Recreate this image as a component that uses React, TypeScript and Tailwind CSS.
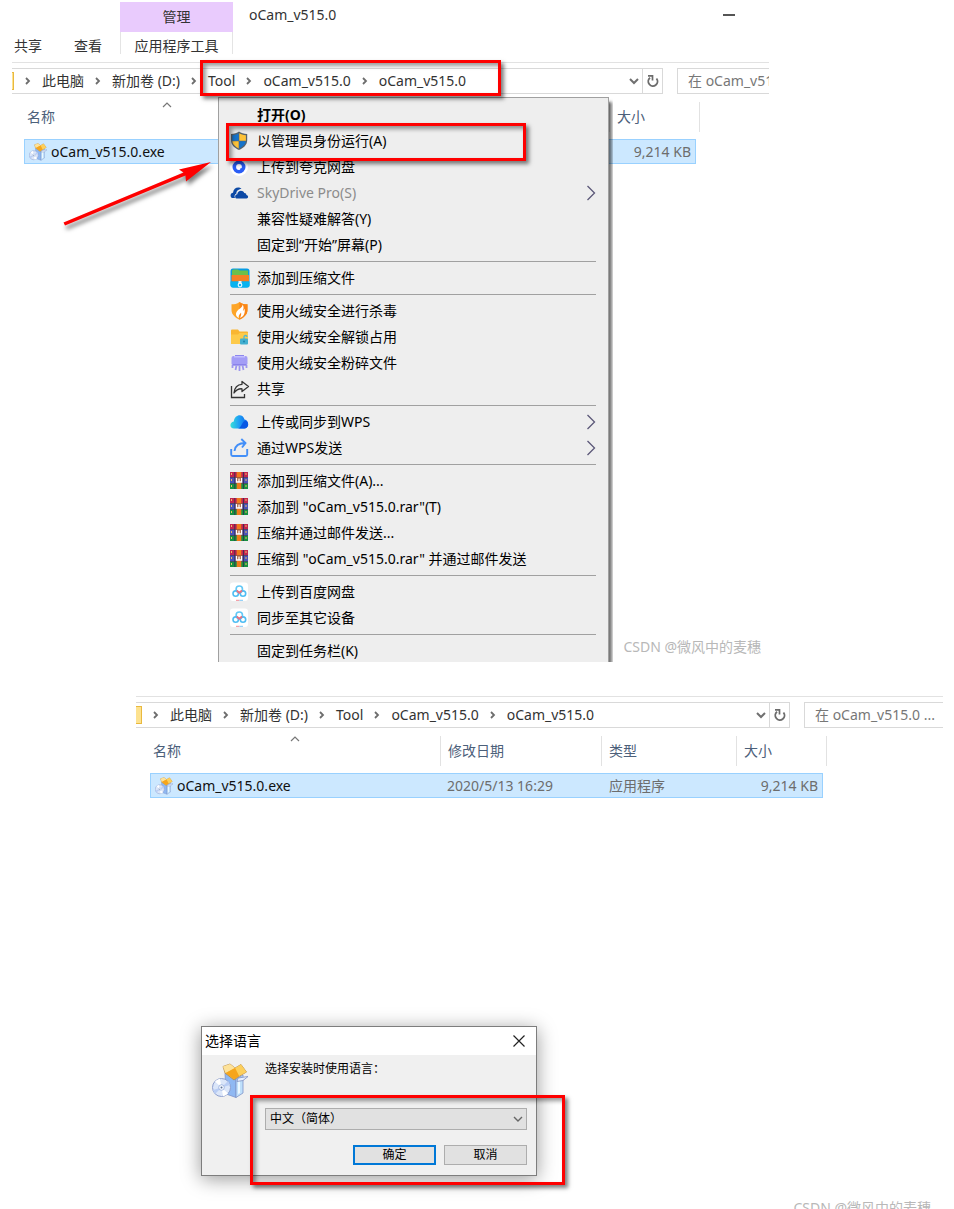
import { ReactNode } from "react";

const FONT = "font-['Noto_Sans','Noto_Sans_CJK_SC',sans-serif]";

/* ---------- icons ---------- */

function SetupIcon({ className }: { className: string }) {
  return (
    <svg viewBox="0 0 36 36" className={className} aria-hidden="true">
      <path d="M13 10 L24 16 L24 34.500 L14 31 Z" fill="#8fb8f2" stroke="#7d93c8" strokeWidth=".8" />
      <path d="M24 16 L31 12 L31 30 L24 34.500 Z" fill="#bfe0fb" stroke="#7d93c8" strokeWidth=".8" />
      <path d="M26 17 L28 16 L28 30 L26 31 Z" fill="#ecf8ff" />
      <path d="M11 3.500 L18 1 L23 5 L29 1.500 L34.500 9 L26 14 L22 17 L13 10 Z" fill="#f9b62d" stroke="#b08a52" strokeWidth=".8" />
      <path d="M18 1 L23 5 L13.500 10 L11 3.500 Z" fill="#fde29a" />
      <path d="M23 5 L29 1.500 L34.500 9 L27 13 Z" fill="#fccf5c" />
      <path d="M23 5 L27 13 L22 16 L14 10 Z" fill="#f6a51c" />
      <path d="M26 15 L36 13.500 L31 17.500 L25 18.500 Z" fill="#e6efff" stroke="#7f8fc0" strokeWidth=".8" />
      <circle cx="9.500" cy="24.500" r="9" fill="#dbe6f9" stroke="#8e9fce" strokeWidth="1" />
      <path d="M9.500 24.500 L3 18.500 A9 9 0 0 1 8 15.800 Z M9.500 24.500 L16 30.500 A9 9 0 0 1 11 33.200 Z" fill="#fff" />
      <path d="M9.500 24.500 L16 18 A9 9 0 0 1 18 22 Z M9.500 24.500 L3 31 A9 9 0 0 1 1 27 Z" fill="#b9cdf4" />
      <circle cx="9.500" cy="24.500" r="2.800" fill="#f4f8ff" stroke="#93a9d8" strokeWidth=".8" />
      <circle cx="9.500" cy="24.500" r="1" fill="#5d7296" />
    </svg>
  );
}

function Icon({ children }: { children: ReactNode }) {
  return (
    <svg viewBox="0 0 20 20" className="size-5" fill="none" aria-hidden="true">
      {children}
    </svg>
  );
}

const ShieldIcon = () => (
  <Icon>
    <path d="M9 .5 C11 2 14 3 17.200 3 V9 C17.200 14 13.500 17 9 19 C4.500 17 1 14 1 9 V3 C4 3 7 2 9 .5Z" fill="#59636b" />
    <path d="M8.700 2.300 V9.700 H2.300 V4.200 C5 4 7 3.400 8.700 2.300Z" fill="#1673c9" />
    <path d="M9.300 2.300 V9.700 H15.900 V4.200 C13 4 11 3.400 9.300 2.300Z" fill="#fdc238" />
    <path d="M8.700 10.300 V17.500 C5 15.500 2.600 13.500 2.300 10.300Z" fill="#fdc238" />
    <path d="M9.300 10.300 V17.500 C13 15.500 15.600 13.500 15.900 10.300Z" fill="#1673c9" />
  </Icon>
);

const QuarkIcon = () => (
  <Icon>
    <circle cx="9" cy="10" r="9" fill="#fff" />
    <circle cx="9" cy="10" r="4.700" stroke="#2a5df5" strokeWidth="3.600" />
    <path d="M10.500 11.500 L13 14" stroke="#2a5df5" strokeWidth="2" />
  </Icon>
);

const SkyDriveIcon = () => (
  <Icon>
    <path d="M2 15 C0 14 0 10 3 9.700 C3.500 5 8.500 3 11.500 6 C8 6 6 8.500 6.500 10.500 C4.500 11 4 13.500 5 15Z" fill="#0c49a5" />
    <path d="M6.500 15.500 C4.500 15 4.800 11.500 7.300 11.200 C7.500 7.200 13 6.500 14.300 10 C16.100 10 16.500 11.200 16.300 12 C18.900 12.500 18.500 15.500 16.500 15.500Z" fill="#0c49a5" />
  </Icon>
);

const ZipIcon = () => (
  <Icon>
    <rect x=".5" y=".5" width="19" height="19" rx="2.500" fill="#079be3" />
    <path d="M2 7.500 V3 Q2 1.500 3.500 1.500 H8 L9.500 2.500 H18 V7.500Z" fill="#6cc04b" />
    <rect x="1.500" y="7" width="17.500" height="6.500" fill="#f58025" />
    <path d="M.5 13.500 H19.500 V17 Q19.500 19.500 17 19.500 H3 Q.5 19.500 .5 17Z" fill="#06b3f0" />
    <rect x="8.500" y="13" width="3" height="3" fill="#dff4ff" />
    <circle cx="10" cy="17" r="1.800" stroke="#dff4ff" strokeWidth="1.200" />
  </Icon>
);

const FlameIcon = () => (
  <Icon>
    <path d="M9.500 1 C12 3 14.500 3.300 17.500 3.300 V9 C17.500 14 13 17 9.500 18.800 C6 17 1.500 14 1.500 9 V3.300 C4.500 3.300 7 3 9.500 1Z" fill="#fda528" />
    <path d="M9.500 1 C12 3 14.500 3.300 17.500 3.300 V9 C17.500 14 13 17 9.500 18.800Z" fill="#fa8617" />
    <path d="M12.500 3.500 C13 7 7 8 6 12.500 C5.700 14.500 7 16 9 17 C8 14 10 13.500 11 11.500 C11.500 13 11 15 10 17 C14 15.500 15.500 11.500 14.500 7.500 C14 9 13.500 9.500 12.800 10 C14 7.500 13.800 5 12.500 3.500Z" fill="#fff" />
  </Icon>
);

const FolderUnlockIcon = () => (
  <Icon>
    <path d="M1 16 V3.500 Q1 2.500 2 2.500 H8 L9.500 4.500 H17 Q18 4.500 18 5.500 V16 Q18 17 17 17 H2 Q1 17 1 16Z" fill="#f9b632" />
    <path d="M1 7.500 H8 L9.500 6 H18 V16 Q18 17 17 17 H2 Q1 17 1 16Z" fill="#fdca4a" />
    <path d="M14 12 V10 Q14 8.500 15.500 8.500 Q17 8.500 17 10" stroke="#52b9d4" strokeWidth="1.300" />
    <rect x="10" y="11.500" width="8" height="6" rx="1" fill="#42afd0" />
    <circle cx="14" cy="14.500" r="1" fill="#1c83ad" />
  </Icon>
);

const ShredIcon = () => (
  <Icon>
    <path d="M5 2 H14 V6 H5Z" fill="#8d86ed" />
    <rect x="1.500" y="3" width="16" height="9.500" rx="2" fill="#a39df6" />
    <path d="M4 3 H15 V4.500 H4Z" fill="#c3bfff" />
    <rect x="3" y="11" width="13" height="1.500" fill="#8a82ea" />
    <path d="M2.500 12 V15 M6.500 12.500 L5.500 17 M9.500 12.500 V18 M12.500 12.500 L13.500 17 M16.500 12 V15" stroke="#9c96ee" strokeWidth="1.800" />
  </Icon>
);

const ShareIcon = () => (
  <Icon>
    <path d="M1.500 7 V18.500 H14.500 V15" stroke="#333" strokeWidth="1.300" />
    <path d="M12 2.500 L18.500 7.500 L12 12.500 V9.800 C8 9.500 6 11 4 14 C4.500 9 7.500 5.500 12 5.300Z" stroke="#333" strokeWidth="1.300" strokeLinejoin="round" />
  </Icon>
);

const CloudIcon = () => (
  <Icon>
    <defs>
      <linearGradient id="cloud" x1="0" y1="0" x2="1" y2="0">
        <stop offset="0" stopColor="#36e0d8" />
        <stop offset=".5" stopColor="#1f9df5" />
        <stop offset="1" stopColor="#0a63ea" />
      </linearGradient>
    </defs>
    <path d="M4 16.500 C-.5 16.500 -1 10.500 3.800 9.500 C4.500 2 13 1 14.500 7.500 C19 8 19.500 16.500 14.500 16.500Z" fill="url(#cloud)" />
    <path d="M8 16.500 C12 15.500 12 8 16.500 8.800 C19.500 11 18.500 16.500 14.500 16.500Z" fill="#0757e4" />
  </Icon>
);

const SendIcon = () => (
  <Icon>
    <path d="M1.200 11 V16.500 Q1.200 18 2.700 18 H15.700 Q17.200 18 17.200 16.500 V11" stroke="#438ff8" strokeWidth="1.900" />
    <path d="M4.500 13 C5 7.500 8.500 5 15.500 5 M11.300 1 L15.500 5 L12 9.500" stroke="#438ff8" strokeWidth="1.900" />
  </Icon>
);

const RarIcon = () => (
  <Icon>
    <rect x="0" y="1" width="18" height="5.500" fill="#c2254f" />
    <rect x="0" y="6.500" width="18" height="6" fill="#4b52b8" />
    <rect x="0" y="12.500" width="18" height="5.500" fill="#179040" />
    <path d="M0 6.500 H18 M0 12.500 H18" stroke="#2c2440" strokeWidth=".6" />
    <path d="M1.500 2 V18 M16 2 V18" stroke="#efc060" strokeWidth="1" strokeDasharray="2 4" />
    <path d="M4.800 1 V18 M13.500 1 V18" stroke="#2c2b52" strokeWidth=".8" />
    <rect x="6.700" y="1" width="4.600" height="17" fill="#f07a1a" />
    <rect x="5.700" y="6" width="6.600" height="6" fill="#a65a38" />
    <path d="M6.500 7 V11 H11.500 V7 M9 7.500 V11" stroke="#fff" strokeWidth="1.300" />
  </Icon>
);

const BaiduIcon = () => (
  <Icon>
    <rect x="0" y=".5" width="18" height="18.500" rx="3" fill="#fff" />
    <circle cx="9.300" cy="7.200" r="3.200" stroke="#62c8f6" strokeWidth="1.600" />
    <circle cx="5.700" cy="11.600" r="2.700" stroke="#4fbdf3" strokeWidth="1.600" />
    <circle cx="13" cy="11.600" r="2.700" stroke="#4fbdf3" strokeWidth="1.600" />
    <path d="M6.800 8.500 L9.300 10.800 L12 8.500" stroke="#f0707f" strokeWidth="1.800" />
    <path d="M6 18.300 H9.500" stroke="#f28a94" strokeWidth="1" />
    <path d="M9.500 18.300 H13" stroke="#7cc6f5" strokeWidth="1" />
  </Icon>
);

/* ---------- explorer ---------- */

function Crumb({ label }: { label: string }) {
  return (
    <>
      <svg viewBox="0 0 28 8" className="h-2 w-7 shrink-0" fill="none" aria-hidden="true">
        <path d="M12 1 L15 4 L12 7" stroke="#6d6d6d" strokeWidth="1.800" />
      </svg>
      <a href="#" className="shrink-0 whitespace-nowrap">
        {label}
      </a>
    </>
  );
}

function AddressBar({ folderClass, searchClass }: { folderClass: string; searchClass: string }) {
  return (
    <div className="flex h-[26px] gap-[14px]">
      <div className="flex min-w-0 flex-1 border border-l-0 border-[#d9d9d9]">
        <nav aria-label="Path" className="flex min-w-0 flex-1 items-center leading-[22px]">
          <span className={`${folderClass} h-[18px] border border-l-0 border-[#e9b93f] bg-[#fde28f]`} />
          <Crumb label="此电脑" />
          <Crumb label="新加卷 (D:)" />
          <Crumb label="Tool" />
          <Crumb label="oCam_v515.0" />
          <Crumb label="oCam_v515.0" />
        </nav>
        <button aria-label="History" className="grid w-[17px] place-items-center">
          <svg viewBox="0 0 10 8" className="h-2 w-2.5" fill="none">
            <path d="M1 2 L5 6 L9 2" stroke="#707070" strokeWidth="2" />
          </svg>
        </button>
        <button aria-label="Refresh" className="grid w-5 place-items-center border-l border-[#d9d9d9]">
          <svg viewBox="0 0 12 14" className="h-3.5 w-3" fill="none">
            <path d="M3 3.800 A4.600 4.600 0 1 0 9.500 4.500" stroke="#6c6c6c" strokeWidth="1.900" />
            <path d="M1 1.800 H5.500 V6.500" stroke="#6c6c6c" strokeWidth="1.700" />
          </svg>
        </button>
      </div>
      <input
        type="text"
        aria-label="Search"
        placeholder="在 oCam_v515.0 ..."
        className={`${searchClass} min-w-0 border border-r-0 border-[#d9d9d9] pl-2.5 placeholder:text-[#777] outline-none`}
      />
    </div>
  );
}

function NameHeader() {
  return (
    <th className="h-[30px] p-0 pl-[3px] text-left align-top font-normal">
      <div className="flex flex-col">
        <svg viewBox="0 0 10 6" className="mr-1 h-1.5 w-2.5 self-center" fill="none" aria-hidden="true">
          <path d="M1 5 L5 1 L9 5" stroke="#777" strokeWidth="1.200" />
        </svg>
        <span className="leading-[18px]">名称</span>
      </div>
    </th>
  );
}

const TH = "h-[30px] border-l border-[#e2e2e2] p-0 pl-[7px] text-left font-normal";
const TD = "h-[25px] border-y border-[#99d1ff] bg-[#cce8ff] p-0";

function NameCell() {
  return (
    <td className={`${TD} border-l`}>
      <div className="flex items-center gap-1 pl-1 text-[#111]">
        <SetupIcon className="size-[18px]" />
        oCam_v515.0.exe
      </div>
    </td>
  );
}

/* ---------- context menu ---------- */

type Item = { label: string; icon?: ReactNode; bold?: boolean; disabled?: boolean; submenu?: boolean };

const GROUPS: Item[][] = [
  [
    { label: "打开(O)", bold: true },
    { label: "以管理员身份运行(A)", icon: <ShieldIcon /> },
    { label: "上传到夸克网盘", icon: <QuarkIcon /> },
    { label: "SkyDrive Pro(S)", icon: <SkyDriveIcon />, disabled: true, submenu: true },
    { label: "兼容性疑难解答(Y)" },
    { label: "固定到“开始”屏幕(P)" },
  ],
  [{ label: "添加到压缩文件", icon: <ZipIcon /> }],
  [
    { label: "使用火绒安全进行杀毒", icon: <FlameIcon /> },
    { label: "使用火绒安全解锁占用", icon: <FolderUnlockIcon /> },
    { label: "使用火绒安全粉碎文件", icon: <ShredIcon /> },
    { label: "共享", icon: <ShareIcon /> },
  ],
  [
    { label: "上传或同步到WPS", icon: <CloudIcon />, submenu: true },
    { label: "通过WPS发送", icon: <SendIcon />, submenu: true },
  ],
  [
    { label: "添加到压缩文件(A)...", icon: <RarIcon /> },
    { label: '添加到 "oCam_v515.0.rar"(T)', icon: <RarIcon /> },
    { label: "压缩并通过邮件发送...", icon: <RarIcon /> },
    { label: '压缩到 "oCam_v515.0.rar" 并通过邮件发送', icon: <RarIcon /> },
  ],
  [
    { label: "上传到百度网盘", icon: <BaiduIcon /> },
    { label: "同步至其它设备", icon: <BaiduIcon /> },
  ],
  [{ label: "固定到任务栏(K)" }],
];

function ContextMenu() {
  return (
    <div className="absolute top-[95px] bottom-0 left-[206px] w-[395px] overflow-hidden">
      <div
        role="menu"
        className="mr-1 h-full border border-b-0 border-[#a0a0a0] bg-[#eeeeee] pt-1 pr-3 pl-[11px] text-black shadow-[3px_5px_3px_rgba(0,0,0,0.55)]"
      >
        {GROUPS.map((group, g) => (
          <div key={g} className={g ? "mt-[3px] border-t border-[#a0a0a0] pt-[3px]" : ""}>
            {group.map((item) => (
              <button
                key={item.label}
                role="menuitem"
                disabled={item.disabled}
                className={`flex h-[26px] w-full items-center gap-[7px] text-left whitespace-nowrap ${
                  item.disabled ? "text-[#8b8b8b]" : ""
                } ${item.bold ? "font-bold" : ""}`}
              >
                <span className="size-5 shrink-0">{item.icon}</span>
                <span className="flex-1">{item.label}</span>
                {item.submenu && (
                  <svg viewBox="0 0 10 16" className="h-4 w-2.5" fill="none" aria-hidden="true">
                    <path d="M1.500 1 L8.500 8 L1.500 15" stroke="#5c5878" strokeWidth="1.300" />
                  </svg>
                )}
              </button>
            ))}
          </div>
        ))}
      </div>
    </div>
  );
}

function Marker({ className }: { className: string }) {
  return (
    <div
      className={`pointer-events-none absolute border-[3px] border-[#fe0000] shadow-[3px_3px_4px_rgba(0,0,0,0.5),inset_3px_3px_4px_rgba(0,0,0,0.4)] ${className}`}
    />
  );
}

/* ---------- sections ---------- */

function ExplorerWithMenu() {
  return (
    <section className="relative mr-[185px] ml-3 min-h-[660px]">
      <header className="flex h-[60px] items-start">
        <nav className="flex h-full w-[108px] shrink-0 items-end gap-8 pb-1 pl-0.5 leading-6 whitespace-nowrap">
          <a href="#">共享</a>
          <a href="#">查看</a>
        </nav>
        <div className="w-[113px] text-center">
          <div className="h-[30px] bg-[#e9cbfd] leading-[30px]">管理</div>
          <a href="#" className="block h-[22px] border-x border-[#e4e4e4] pt-0.5 leading-6 whitespace-nowrap">
            应用程序工具
          </a>
        </div>
        <h1 className="flex-1 pl-4 leading-[26px]">oCam_v515.0</h1>
        <button aria-label="Minimize" className="mr-[34px] flex h-[26px] w-3 items-center">
          <span className="h-0.5 w-full bg-[#555]" />
        </button>
      </header>
      <div className="mb-[5px] border-t border-[#e2e2e2]" />
      <AddressBar folderClass="w-[2px]" searchClass="w-[92px]" />
      <table className="mt-2 ml-3 w-[676px] table-fixed border-separate border-spacing-0">
        <colgroup>
          <col className="w-[286px]" />
          <col />
          <col className="w-[87px]" />
          <col className="w-1" />
        </colgroup>
        <thead className="text-[#4c607a]">
          <tr>
            <NameHeader />
            <td />
            <th className={TH}>大小</th>
            <td className="border-r border-[#e2e2e2]" />
          </tr>
        </thead>
        <tbody className="text-[#6d6d6d]">
          <tr>
            <td colSpan={4} className="h-[7px] p-0" />
          </tr>
          <tr>
            <NameCell />
            <td className={TD} />
            <td className={`${TD} border-r pr-1 text-right`}>9,214 KB</td>
            <td />
          </tr>
        </tbody>
      </table>
      <p className="absolute right-2 bottom-1 leading-[22px] text-[#b8b8b8]">CSDN @微风中的麦穗</p>

      <ContextMenu />
      <Marker className="top-[58px] left-[188px] h-9 w-[301px]" />
      <Marker className="top-[121px] left-[214px] h-[38px] w-[300px]" />
      <svg
        viewBox="0 0 160 80"
        className="absolute top-[154px] left-[48px] h-20 w-40 drop-shadow-[2px_4px_2px_rgba(0,0,0,0.5)]"
        aria-hidden="true"
      >
        <path d="M3.500 66.500 L123.500 16.500 L119 13.500 L151 6 L126 25.500 L125.500 19.500 L5 69.500 Z" fill="#fe0000" />
      </svg>
    </section>
  );
}

function Explorer() {
  return (
    <section className="mt-[34px] mr-[11px] ml-[136px]">
      <div className="mb-[5px] border-t border-[#e2e2e2]" />
      <AddressBar folderClass="w-[6px]" searchClass="w-[139px]" />
      <table className="mt-2 ml-[14px] w-[677px] table-fixed border-separate border-spacing-0">
        <colgroup>
          <col />
          <col className="w-[161px]" />
          <col className="w-[135px]" />
          <col className="w-[87px]" />
          <col className="w-1" />
        </colgroup>
        <thead className="text-[#4c607a]">
          <tr>
            <NameHeader />
            <th className={TH}>修改日期</th>
            <th className={TH}>类型</th>
            <th className={TH}>大小</th>
            <td className="border-r border-[#e2e2e2]" />
          </tr>
        </thead>
        <tbody className="text-[#6d6d6d]">
          <tr>
            <td colSpan={5} className="h-[7px] p-0" />
          </tr>
          <tr>
            <NameCell />
            <td className={`${TD} pl-[7px]`}>2020/5/13 16:29</td>
            <td className={`${TD} pl-2`}>应用程序</td>
            <td className={`${TD} border-r pr-1 text-right`}>9,214 KB</td>
            <td />
          </tr>
        </tbody>
      </table>
    </section>
  );
}

function LanguageDialog() {
  return (
    <div className="relative mt-[228px] ml-[201px] w-[336px]">
      <div role="dialog" aria-labelledby="dlg-title" className="border border-[#7d7d7d] bg-[#f0f0f0] shadow-[0_3px_18px_rgba(0,0,0,0.4)]">
        <div className="flex h-7 items-center justify-between bg-white pr-[11px] pl-[3px] text-black">
          <h2 id="dlg-title">选择语言</h2>
          <button aria-label="Close">
            <svg viewBox="0 0 12 12" className="size-3" fill="none">
              <path d="M.5 .5 L11.500 11.500 M11.500 .5 L.5 11.500" stroke="#222" strokeWidth="1.200" />
            </svg>
          </button>
        </div>
        <div className="flex gap-[17px] pt-1 pr-[9px] pb-2.5 pl-2.5 text-xs text-black">
          <SetupIcon className="mt-1 size-9 shrink-0" />
          <div className="flex-1">
            <label htmlFor="lang" className="block leading-5">
              选择安装时使用语言：
            </label>
            <div className="mt-[29px] grid">
              <select
                id="lang"
                className="col-start-1 row-start-1 h-[22px] w-full appearance-none border border-[#adadad] bg-[#e1e1e1] pl-1"
              >
                <option>中文（简体）</option>
              </select>
              <svg
                viewBox="0 0 10 6"
                className="pointer-events-none col-start-1 row-start-1 mr-1 h-1.5 w-2.5 self-center justify-self-end"
                fill="none"
                aria-hidden="true"
              >
                <path d="M1 1 L5 5 L9 1" stroke="#666" strokeWidth="1.400" />
              </svg>
            </div>
            <div className="mt-[15px] flex justify-end gap-2">
              <button className="h-5 w-[83px] border-2 border-[#0078d7] bg-[#e1e1e1] leading-4">确定</button>
              <button className="h-5 w-[83px] border border-[#adadad] bg-[#e1e1e1] leading-4">取消</button>
            </div>
          </div>
        </div>
      </div>
      <Marker className="top-[69px] left-[49px] h-[90px] w-[315px]" />
    </div>
  );
}

export default function App() {
  return (
    <main className={`${FONT} min-h-screen bg-white pt-0.5 text-sm leading-5 text-[#333]`}>
      <ExplorerWithMenu />
      <Explorer />
      <LanguageDialog />
      <p className="mt-[22px] mr-[23px] h-[11px] overflow-hidden text-right text-[#b8b8b8]">CSDN @微风中的麦穗</p>
    </main>
  );
}
